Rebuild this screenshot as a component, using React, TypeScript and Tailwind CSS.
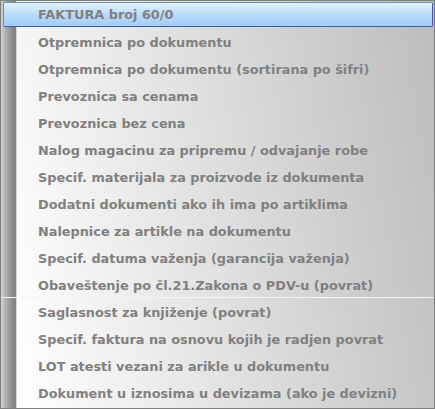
const items = [
  'Otpremnica po dokumentu',
  'Otpremnica po dokumentu (sortirana po šifri)',
  'Prevoznica sa cenama',
  'Prevoznica bez cena',
  'Nalog magacinu za pripremu / odvajanje robe',
  'Specif. materijala za proizvode iz dokumenta',
  'Dodatni dokumenti ako ih ima po artiklima',
  'Nalepnice za artikle na dokumentu',
  'Specif. datuma važenja (garancija važenja)',
  'Obaveštenje po čl.21.Zakona o PDV-u (povrat)',
];

const items2 = [
  'Saglasnost za knjiženje (povrat)',
  'Specif. faktura na osnovu kojih je radjen povrat',
  'LOT atesti vezani za arikle u dokumentu',
  'Dokument u iznosima u devizama (ako je devizni)',
];

function Row({ label }: { label: string }) {
  return (
    <div className="h-[27px] flex items-center pl-[37px] whitespace-nowrap">{label}</div>
  );
}

export default function App() {
  return (
    <div
      className="w-[435px] h-[409px] border border-[#7f7f7f] flex text-[12.85px] font-bold text-[#808080] overflow-hidden"
      style={{ fontFamily: '"DejaVu Sans", Verdana, sans-serif' }}
    >
      <div className="relative flex-1 flex flex-col bg-[linear-gradient(80deg,#ffffff_4%,#bcbcbc_100%)]">
        {/* left gutter strip */}
        <div className="absolute left-0 top-0 bottom-0 w-[16px] bg-[linear-gradient(to_right,#cfcfcf,#a6a6a6_40%,#7c7c7c_90%,#ffffff)]" />
        <div className="relative pt-[1px] pl-[2px] pr-[1px] h-[28px]">
          <div className="h-[25px] flex items-center pl-[34px] rounded-[2px] border border-[#6f8fc8] border-r-[#3d5ea6] border-b-[#3d5ea6] bg-[linear-gradient(to_bottom,#e6f2fd,#bcdcfa_45%,#a2cdf6)]">
            FAKTURA broj 60/0
          </div>
        </div>
        <div className="relative">
          {items.map((it) => (
            <Row key={it} label={it} />
          ))}
        </div>
        <div className="relative h-[1px] bg-[#f4f4f4] -mt-[2px] mb-[1px]" />
        <div className="relative">
          {items2.map((it) => (
            <Row key={it} label={it} />
          ))}
        </div>
      </div>
    </div>
  );
}
